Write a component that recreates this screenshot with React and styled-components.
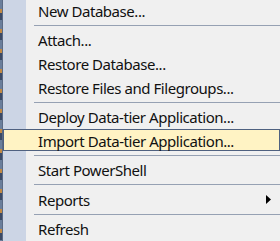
import React from "react";
import styled, { createGlobalStyle } from "styled-components";

const GlobalStyle = createGlobalStyle`
    html, body {
        margin: 0;
        padding: 0;
        background: #f0f0f0;
    }
    body {
        font-family: "Noto Sans", "Open Sans", sans-serif;
    }
`;

const items = [
    { label: "New Database..." },
    { sep: true },
    { label: "Attach..." },
    { label: "Restore Database..." },
    { label: "Restore Files and Filegroups..." },
    { sep: true },
    { label: "Deploy Data-tier Application..." },
    { label: "Import Data-tier Application...", active: true },
    { sep: true },
    { label: "Start PowerShell" },
    { sep: true },
    { label: "Reports", submenu: true },
    { sep: true },
    { label: "Refresh" },
];

const App = () => {
    return (
        <>
            <GlobalStyle />
            <Frame>
                <Backdrop />
                <Menu>
                    <Gutter />
                    <List>
                        {items.map((item, i) =>
                            item.sep ? (
                                <Separator key={i} />
                            ) : (
                                <Item key={i} $active={item.active}>
                                    <Label>{item.label}</Label>
                                    {item.submenu && (
                                        <Arrow width="5" height="9" viewBox="0 0 5 9">
                                            <polygon points="0,0 5,4.5 0,9" fill="#000" />
                                        </Arrow>
                                    )}
                                </Item>
                            )
                        )}
                    </List>
                </Menu>
            </Frame>
        </>
    );
};

export default App;

const Frame = styled.div`
    display: flex;
    width: 280px;
    height: 241px;
    overflow: hidden;
`;

const Backdrop = styled.div`
    width: 2px;
    flex-shrink: 0;
    background: repeating-linear-gradient(
        to bottom,
        #6b7f9c 0px,
        #6b7f9c 9px,
        #c28a45 9px,
        #c28a45 13px,
        #3b4a66 13px,
        #3b4a66 20px
    );
`;

const Menu = styled.div`
    position: relative;
    flex: 1;
    display: flex;
    border-left: 1px solid #5b6a84;
    background: #f0f0f0;
`;

const Gutter = styled.div`
    width: 23px;
    flex-shrink: 0;
    background: #ccd5e5;
`;

const List = styled.div`
    flex: 1;
    display: flex;
    flex-direction: column;
    margin-top: -1px;
`;

const Item = styled.div`
    position: relative;
    height: 24px;
    display: flex;
    align-items: center;
    justify-content: space-between;
    padding: 0 9px 0 12px;
    box-sizing: border-box;

    ${(p) =>
        p.$active &&
        `
        &::before {
            content: "";
            position: absolute;
            top: 0;
            bottom: 1px;
            left: -23px;
            right: 0;
            background: #fff3c4;
            border: 1px solid #4f6180;
        }
    `}
`;

const Label = styled.span`
    position: relative;
    font-size: 15px;
    color: #111;
    white-space: nowrap;
    letter-spacing: -0.45px;
`;

const Arrow = styled.svg`
    position: relative;
    display: block;
`;

const Separator = styled.div`
    height: 6px;
    display: flex;
    align-items: center;
    padding-left: 8px;

    &::after {
        content: "";
        flex: 1;
        height: 1px;
        background: #96a1b3;
    }
`;
